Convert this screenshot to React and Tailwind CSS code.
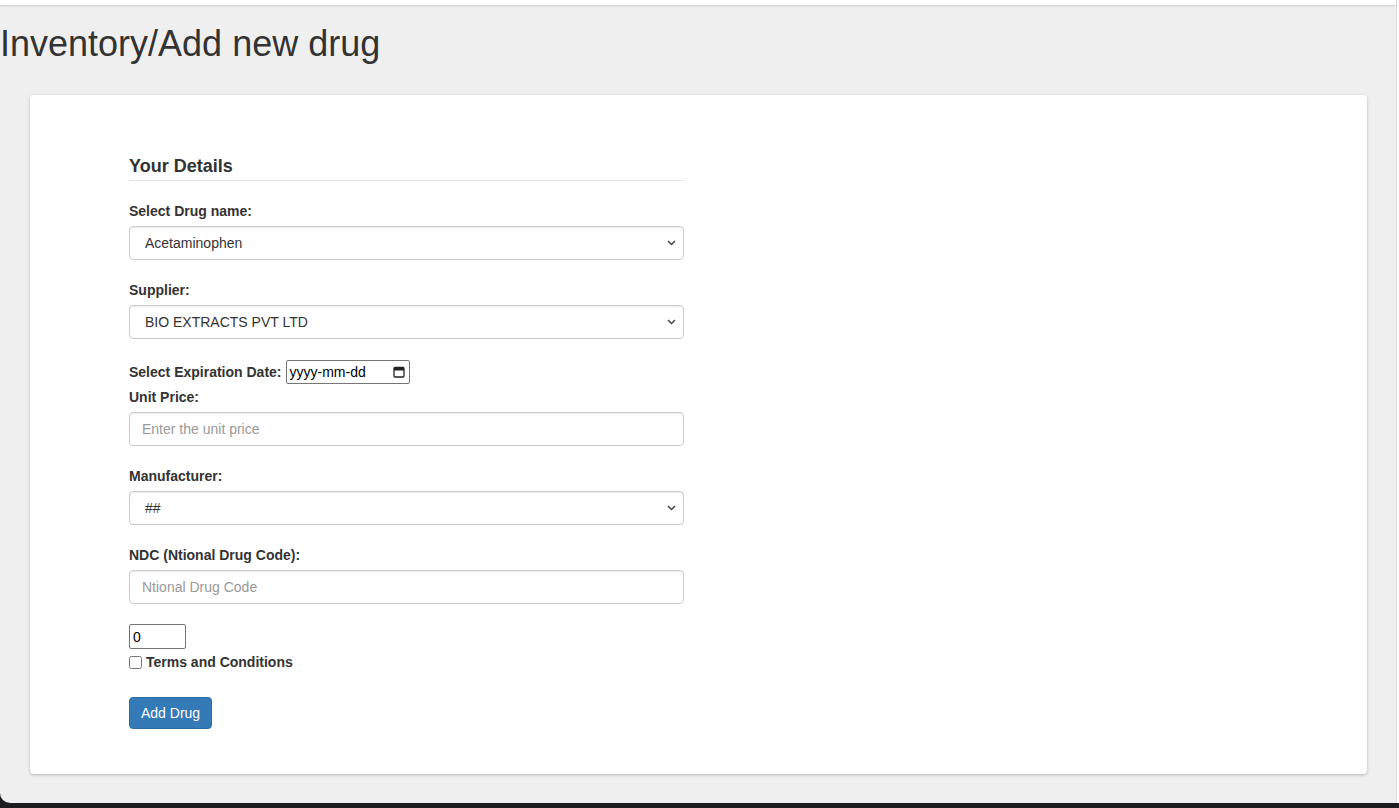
import { useState } from "react";

const Chevron = () => (
  <svg
    className="pointer-events-none absolute right-[8px] top-1/2 -translate-y-1/2"
    width="9"
    height="6"
    viewBox="0 0 9 6"
    fill="none"
  >
    <path d="M1 1l3.5 3.5L8 1" stroke="#444" strokeWidth="1.5" />
  </svg>
);

const SelectField = ({ label, value, options }) => (
  <div className="flex flex-col mb-[20px]">
    <label className="text-[14px] leading-[20px] font-bold text-[#333] mb-[5px]">{label}</label>
    <div className="relative">
      <select
        defaultValue={value}
        className="appearance-none w-full h-[34px] border border-[#ccc] rounded-[4px] bg-white pl-[15px] pr-[24px] text-[14px] text-[#333] shadow-[inset_0_1px_1px_rgba(0,0,0,0.075)] outline-none"
      >
        {options.map((o) => (
          <option key={o}>{o}</option>
        ))}
      </select>
      <Chevron />
    </div>
  </div>
);

const TextField = ({ label, placeholder }) => (
  <div className="flex flex-col mb-[20px]">
    <label className="text-[14px] leading-[20px] font-bold text-[#333] mb-[5px]">{label}</label>
    <input
      type="text"
      placeholder={placeholder}
      className="w-full h-[34px] border border-[#ccc] rounded-[4px] bg-white px-[12px] text-[14px] text-[#555] placeholder:text-[#999] shadow-[inset_0_1px_1px_rgba(0,0,0,0.075)] outline-none"
    />
  </div>
);

const App = () => {
  const [agree, setAgree] = useState(false);

  return (
    <div className="w-[1399px] h-[808px] bg-[#1c1c1e] overflow-hidden font-['Liberation_Sans',Arial,sans-serif]">
      <div className="h-[803px] flex bg-[#efefef] rounded-bl-[10px] overflow-hidden">
        <div className="flex-1 flex flex-col">
          <div className="h-[5px] bg-white shadow-[0_1px_2px_rgba(0,0,0,0.15)] relative z-10" />

          <h1 className="mt-[21px] text-[36px] leading-[36px] text-[#333]">Inventory/Add new drug</h1>

          <div className="mt-[33px] ml-[30px] mr-[29px] h-[679px] bg-white rounded-[4px] shadow-[0_1px_3px_rgba(0,0,0,0.25)] pt-[61px] pl-[99px]">
            <form className="w-[555px] flex flex-col">
              {/* Your Details */}
              <h4 className="text-[18px] leading-[20px] font-bold text-[#333] pb-[4px] border-b border-[#e5e5e5] mb-[20px]">
                Your Details
              </h4>

              <SelectField
                label="Select Drug name:"
                value="Acetaminophen"
                options={["Acetaminophen", "Ibuprofen", "Amoxicillin"]}
              />
              <SelectField
                label="Supplier:"
                value="BIO EXTRACTS PVT LTD"
                options={["BIO EXTRACTS PVT LTD"]}
              />

              {/* Expiration date */}
              <div className="flex items-center h-[26px]">
                <span className="text-[14px] font-bold text-[#333] mr-[4px]">Select Expiration Date:</span>
                <div className="w-[124px] h-[24px] border border-[#767676] rounded-[2px] flex items-center justify-between pl-[3px] pr-[4px] text-[14px] text-black">
                  <span>yyyy-mm-dd</span>
                  <svg width="12" height="12" viewBox="0 0 12 12" fill="none">
                    <rect x="1" y="1.5" width="10" height="9.5" rx="1" stroke="#222" strokeWidth="1.3" />
                    <rect x="1" y="1.5" width="10" height="3" fill="#222" />
                  </svg>
                </div>
              </div>

              <div className="mt-[2px]">
                <TextField label="Unit Price:" placeholder="Enter the unit price" />
              </div>

              <SelectField label="Manufacturer:" value="##" options={["##"]} />

              <TextField label="NDC (Ntional Drug Code):" placeholder="Ntional Drug Code" />

              <input
                type="text"
                defaultValue="0"
                className="w-[57px] h-[25px] border border-[#767676] rounded-[2px] px-[3px] text-[14px] text-black outline-none"
              />

              <label className="flex items-center h-[20px] mt-[3px] text-[14px] font-bold text-[#333]">
                <input
                  type="checkbox"
                  checked={agree}
                  onChange={() => setAgree(!agree)}
                  className="w-[13px] h-[13px] m-0 mr-[4px]"
                />
                Terms and Conditions
              </label>

              <div className="mt-[25px]">
                <button
                  type="button"
                  className="h-[32px] px-[11px] bg-[#337ab7] border border-[#2e6da4] rounded-[4px] text-white text-[14px]"
                >
                  Add Drug
                </button>
              </div>
            </form>
          </div>
        </div>
        <div className="w-[3px] bg-white border-l border-[#ddd]" />
      </div>
    </div>
  );
};

export default App;
